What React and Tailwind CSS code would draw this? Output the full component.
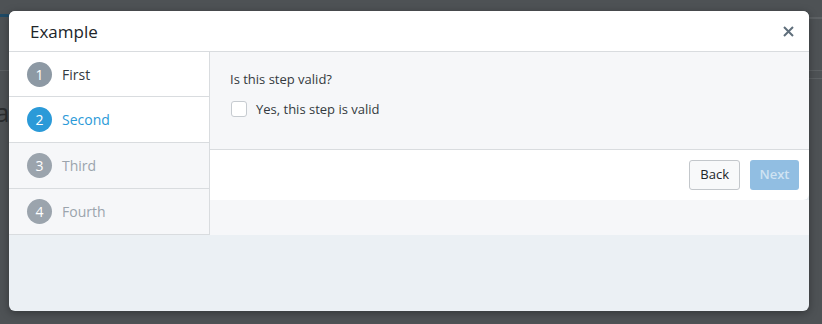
import React, { useState } from "react"

const steps = [
  { n: 1, label: "First", state: "done" },
  { n: 2, label: "Second", state: "active" },
  { n: 3, label: "Third", state: "todo" },
  { n: 4, label: "Fourth", state: "todo" },
]

function StepRow({ step, first }) {
  const rowBg = step.state === "todo" ? "bg-[#f6f7f9]" : "bg-white"
  const circle =
    step.state === "active" ? "bg-[#2b9ad8]" : step.state === "done" ? "bg-[#8d99a4]" : "bg-[#9ba4ad]"
  const text =
    step.state === "active" ? "text-[#2b9ad8]" : step.state === "done" ? "text-[#343a40]" : "text-[#9ba4ad]"

  return (
    <div
      className={`${first ? "h-[45px]" : "h-[46px]"} flex items-center pl-[18px] border-b border-[#d9dcdf] ${rowBg}`}>
      <div
        className={`w-[25px] h-[25px] rounded-full flex items-center justify-center text-white text-[14px] ${circle}`}>
        {step.n}
      </div>
      <span className={`ml-[10px] text-[14px] ${text}`}>{step.label}</span>
    </div>
  )
}

export default function App() {
  const [valid, setValid] = useState(false)

  return (
    <div
      className="relative w-full h-[324px] bg-[#4e5255] overflow-hidden pt-[11px] pl-[9px]"
      style={{ fontFamily: '"Open Sans", "Noto Sans", sans-serif' }}>
      {/* page behind the overlay */}
      <div className="absolute left-0 top-[14px] w-[10px] h-[3px] bg-[#1f4a66]" />
      <div className="absolute left-0 top-[70px] w-[10px] h-px bg-[#5d6164]" />
      <div className="absolute left-[-5px] top-[99px] text-[26px] text-[#2a2c2e] leading-none">a</div>
      <div className="absolute left-[809px] top-[17px] w-[13px] h-[2px] bg-[#5d6164]" />
      <div className="absolute left-[809px] top-[70px] w-[13px] h-px bg-[#5d6164]" />
      <div className="absolute left-[809px] top-[78px] w-[13px] h-px bg-[#5d6164]" />

      <div className="relative w-[800px] h-[300px] rounded-[6px] bg-[#ebf0f4] overflow-hidden shadow-[0_2px_8px_rgba(0,0,0,0.35)]">
        <div className="h-[41px] bg-white border-b border-[#d9dcdf] flex items-center justify-between pl-[21px] pr-[15px]">
          <h2 className="text-[17px] text-[#212529] leading-none">Example</h2>
          <button className="text-[#5f6e7b]">
            <svg width="11" height="11" viewBox="0 0 11 11">
              <path d="M1 1L10 10M10 1L1 10" stroke="currentColor" strokeWidth="2" />
            </svg>
          </button>
        </div>

        <div className="flex">
          <div className="w-[201px] border-r border-[#d9dcdf]">
            {steps.map((s, i) => (
              <StepRow key={s.n} step={s} first={i === 0} />
            ))}
          </div>

          <div className="flex-1 flex flex-col">
            <div className="h-[98px] bg-[#f6f7f9] border-b border-[#d9dcdf] pl-[20px] pt-[18px]">
              <p className="text-[13px] text-[#343a40]">Is this step valid?</p>
              <label className="mt-[10px] flex items-center cursor-pointer">
                <input
                  type="checkbox"
                  checked={valid}
                  onChange={(e) => setValid(e.target.checked)}
                  className="appearance-none w-[16px] h-[16px] ml-px rounded-[3px] border border-[#c6cbd0] bg-white"
                />
                <span className="ml-[9px] text-[13px] text-[#343a40]">Yes, this step is valid</span>
              </label>
            </div>
            <div className="h-[50px] bg-white rounded-br-[6px] flex items-center justify-end gap-[10px] pr-[10px]">
              <button className="h-[30px] px-[10px] rounded-[3px] border border-[#c3c7cb] bg-[#f8f9fa] text-[13px] text-[#212529]">
                Back
              </button>
              <button
                disabled={!valid}
                className="h-[30px] w-[49px] rounded-[3px] bg-[#91bee2] text-[13px] font-semibold text-[#cfe3f2]">
                Next
              </button>
            </div>
            <div className="h-[35px] bg-[#f6f7f9]" />
          </div>
        </div>
      </div>
    </div>
  )
}
